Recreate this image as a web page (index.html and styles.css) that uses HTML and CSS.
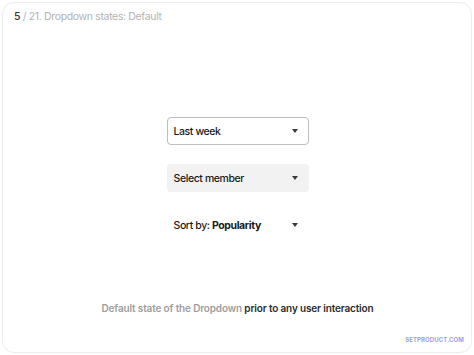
FILE: index.html
```html
<!DOCTYPE html>
<html lang="en">
<head>
  <meta charset="UTF-8" />
  <meta name="viewport" content="width=device-width, initial-scale=1.0"/>
  <title>Dropdown states: Default</title>
  <link rel="stylesheet" href="styles.css">
</head>
<body>
  <div class="card">
    <div class="crumb"><span class="num">5</span> / 21. Dropdown states: Default</div>

    <div class="stack">
      <div class="dropdown outlined">
        <span>Last week</span>
        <span class="caret"></span>
      </div>
      <div class="dropdown filled">
        <span>Select member</span>
        <span class="caret"></span>
      </div>
      <div class="dropdown plain">
        <span>Sort by: <strong>Popularity</strong></span>
        <span class="caret"></span>
      </div>
    </div>

    <p class="caption">Default state of the Dropdown <span class="dark">prior to any user interaction</span></p>

    <div class="brand">SETPRODUCT.COM</div>
  </div>
</body>
</html>
```

FILE: styles.css
```css
* {
  box-sizing: border-box;
}

body {
  margin: 0;
  background: #ffffff;
  font-family: Inter, 'Noto Sans', sans-serif;
  color: #1f1f1f;
}

.card {
  margin: 2px;
  height: 351px;
  border: 1px solid #ececec;
  border-radius: 12px;
  display: flex;
  flex-direction: column;
  padding: 7px 10px 0 11px;
}

.crumb {
  font-size: 10.5px;
  line-height: 14px;
  letter-spacing: -0.35px;
  color: #b3b3b3;
}

.crumb .num {
  color: #333333;
  font-weight: 500;
}

.stack {
  margin-top: 93px;
  display: flex;
  flex-direction: column;
  align-items: center;
  gap: 19px;
}

.dropdown {
  width: 142px;
  height: 28px;
  display: flex;
  align-items: center;
  justify-content: space-between;
  padding: 0 11px 0 7px;
  font-size: 10.5px;
  font-weight: 500;
  letter-spacing: -0.4px;
  border-radius: 4px;
  color: #1a1a1a;
}

.dropdown.outlined {
  border: 1px solid #bdbdbd;
  padding-left: 6px;
  padding-right: 10px;
}

.dropdown.filled {
  background: #f2f2f2;
}

.dropdown strong {
  font-weight: 700;
}

.caret {
  width: 0;
  height: 0;
  border-left: 3.5px solid transparent;
  border-right: 3.5px solid transparent;
  border-top: 4px solid #3a3a3a;
}

.caption {
  margin: 62px 0 0;
  text-align: center;
  font-size: 10px;
  line-height: 14px;
  font-weight: 600;
  letter-spacing: -0.15px;
  color: #9e9e9e;
}

.caption .dark {
  color: #2b2b2b;
}

.brand {
  margin-top: 20px;
  margin-right: -3px;
  align-self: flex-end;
  font-size: 6px;
  line-height: 10px;
  font-weight: 700;
  letter-spacing: 0.1px;
  color: #9aa1e6;
}
```
